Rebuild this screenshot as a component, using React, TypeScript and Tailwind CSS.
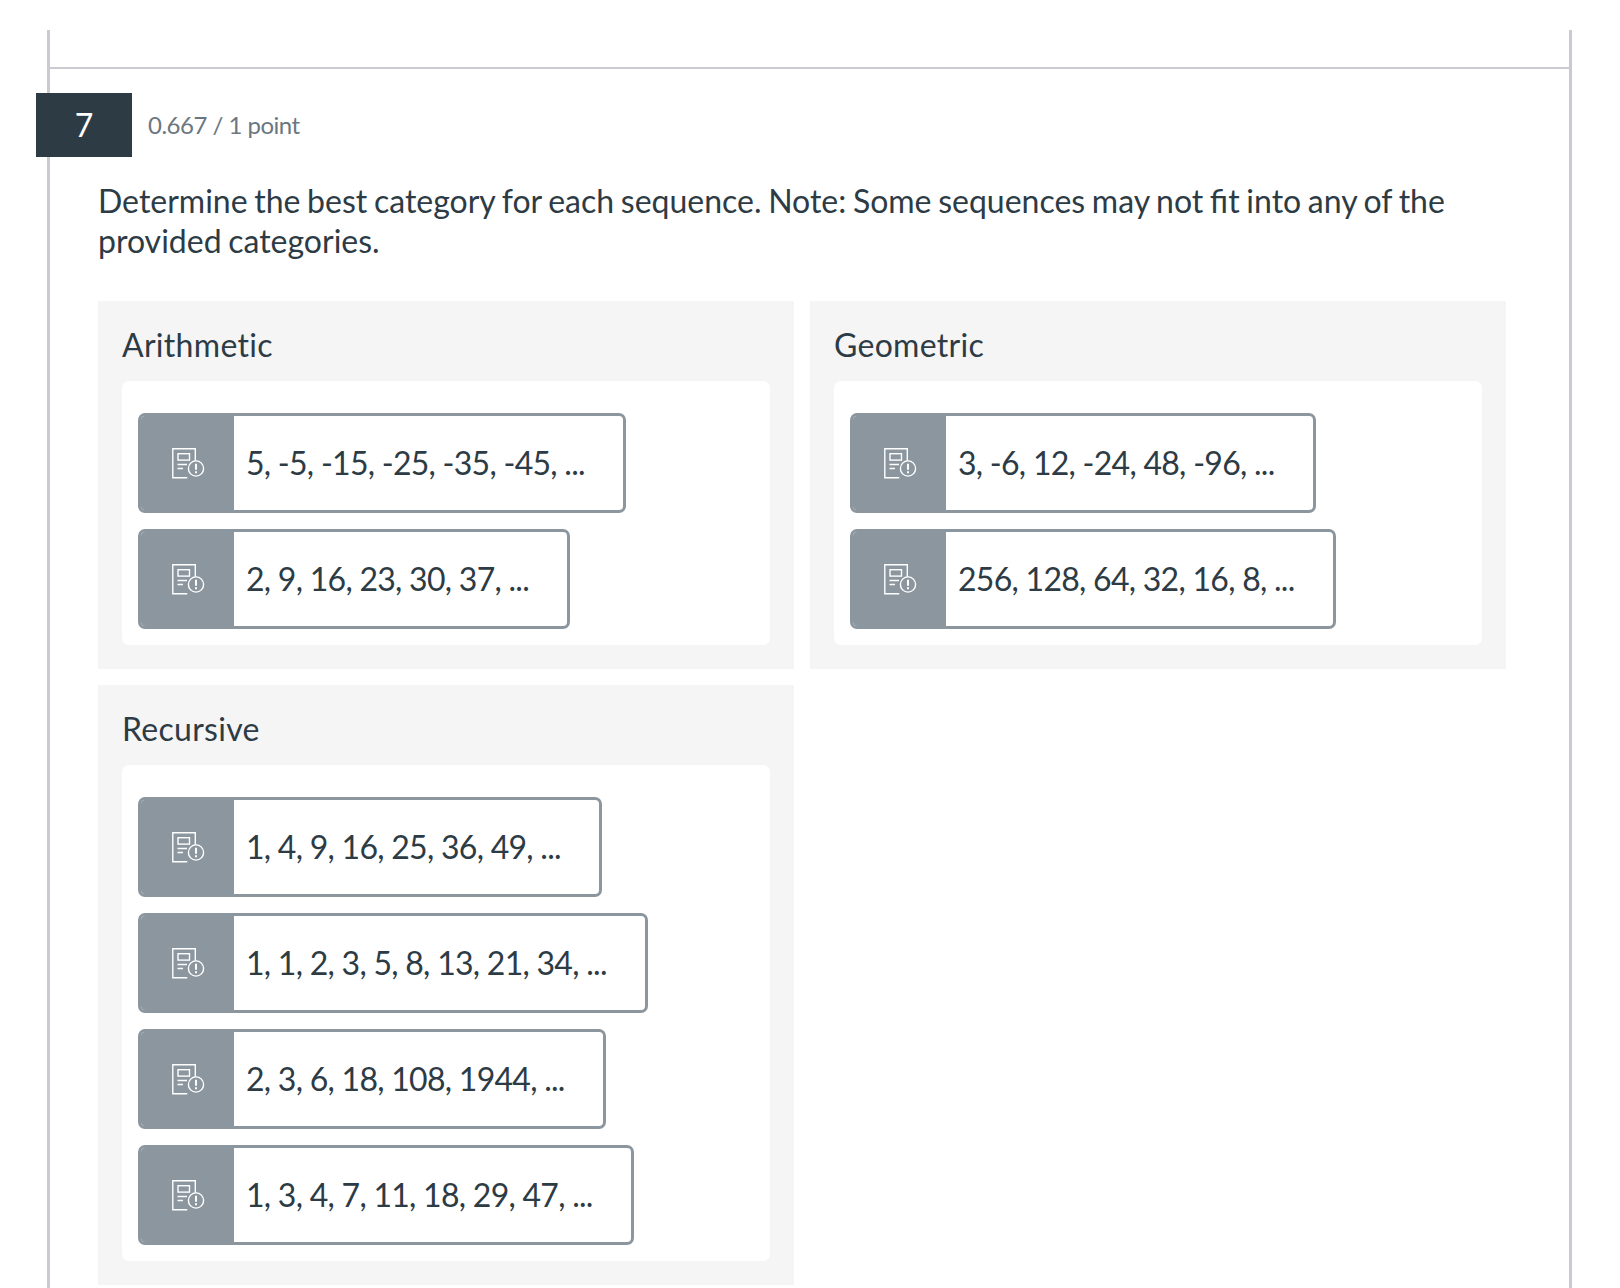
const arithmetic = ['5, -5, -15, -25, -35, -45, ...', '2, 9, 16, 23, 30, 37, ...'];
const geometric = ['3, -6, 12, -24, 48, -96, ...', '256, 128, 64, 32, 16, 8, ...'];
const recursive = [
  '1, 4, 9, 16, 25, 36, 49, ...',
  '1, 1, 2, 3, 5, 8, 13, 21, 34, ...',
  '2, 3, 6, 18, 108, 1944, ...',
  '1, 3, 4, 7, 11, 18, 29, 47, ...',
];

function ItemIcon() {
  return (
    <svg width="33" height="31" viewBox="0 0 33 31" fill="none" stroke="white" strokeWidth="1.4">
      <path d="M23.3 13V.8H.8v29h14.5" />
      <rect x="6" y="5.7" width="11.5" height="6.4" />
      <path d="M5.5 16.5h9.5M5.5 20.5h5.5" />
      <circle cx="24" cy="20.5" r="7.6" />
      <path d="M24 15.8v6" strokeWidth="2" />
      <path d="M24 23.2v2" strokeWidth="2" />
    </svg>
  );
}

function Item({ text }: { text: string }) {
  return (
    <div className="flex h-[100px] w-fit overflow-hidden rounded-[7px] border-[3px] border-[#8b969e] bg-white">
      <div className="flex w-[93px] items-center justify-center bg-[#8b969e] pl-[2px]">
        <ItemIcon />
      </div>
      <div className="flex items-center pl-[12px] pr-[38px] text-[32px] tracking-[-0.72px] text-[#2d3b45]">
        {text}
      </div>
    </div>
  );
}

function Category({ title, items }: { title: string; items: string[] }) {
  return (
    <div className="bg-[#f5f5f5] px-6 pb-6 pt-[24px]">
      <h3 className="mb-[14px] h-[42px] text-[32px] leading-[40px] tracking-[0.3px] text-[#2d3b45] [font-variant-ligatures:none]">
        {title}
      </h3>
      <div className="flex flex-col gap-4 rounded-[7px] bg-white p-4 pt-8">
        {items.map((item) => (
          <Item key={item} text={item} />
        ))}
      </div>
    </div>
  );
}

export default function App() {
  return (
    <div className="h-[1288px] overflow-hidden bg-white pl-[47px] pr-[48px] pt-[30px] font-['Lato','Liberation_Sans',sans-serif]">
      <div className="h-[1258px] border-x-[3px] border-[#c9cbd0]">
        <div className="h-[39px] border-b-2 border-[#c9cbd0]" />
        <div className="mt-6 flex items-center">
          <div className="-ml-[14px] flex h-[64px] w-[96px] items-center justify-center bg-[#2d3b45] text-[32px] text-white">
            7
          </div>
          <span className="ml-4 text-[24px] tracking-[-0.5px] text-[#6b7780]">0.667 / 1 point</span>
        </div>
        <p className="ml-12 mt-[24px] w-[1400px] text-[32px] leading-[40px] text-[#2d3b45] [word-spacing:-0.048em]">
          Determine the best category for each sequence. Note: Some sequences may not fit into any of the provided
          categories.
        </p>
        <div className="ml-12 mt-[40px] grid w-[1408px] grid-cols-2 items-start gap-4">
          <Category title="Arithmetic" items={arithmetic} />
          <Category title="Geometric" items={geometric} />
          <Category title="Recursive" items={recursive} />
        </div>
      </div>
    </div>
  );
}
